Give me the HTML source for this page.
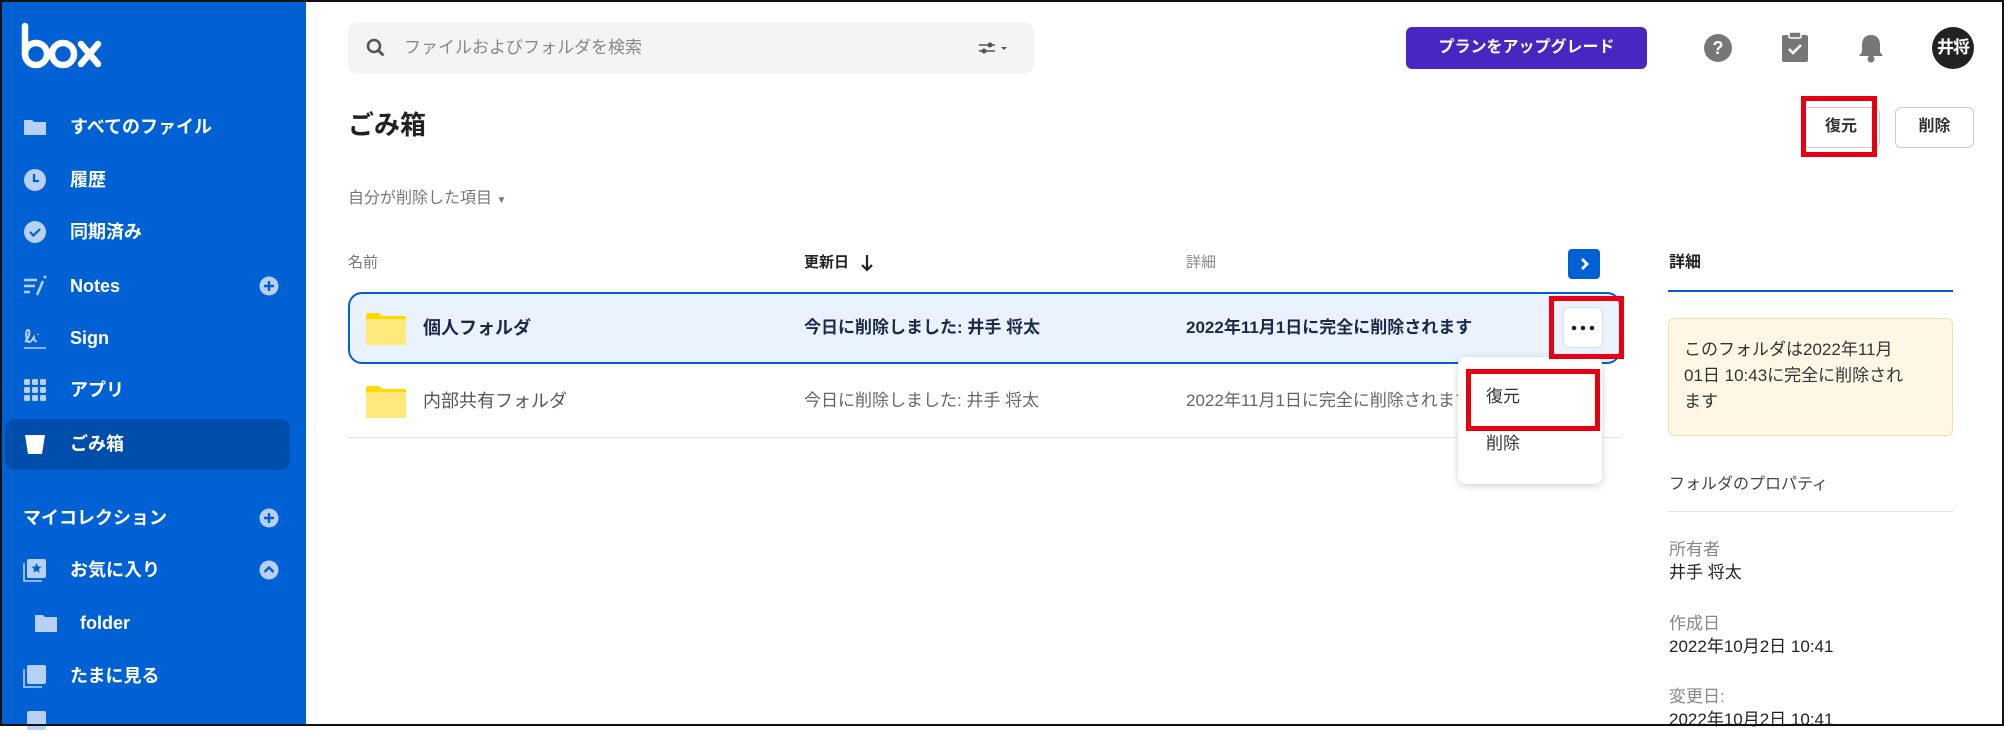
<!DOCTYPE html>
<html><head><meta charset="utf-8"><style>
*{margin:0;padding:0;box-sizing:border-box}
body{width:2004px;height:726px;overflow:hidden;background:#fff;font-family:"Liberation Sans","Noto Sans CJK JP",sans-serif;position:relative;color:#222}
.frame{position:absolute;left:0;top:0;width:2004px;height:726px;border:2px solid #111;z-index:50;pointer-events:none}
.abs{position:absolute;white-space:nowrap}
.side{position:absolute;left:0;top:0;width:306px;height:726px;background:#0061d5}
.nav{position:absolute;left:70px;color:#fff;font-weight:bold;font-size:18px;line-height:20px;transform:translateY(-10px)}
.ic{position:absolute;left:23px;width:24px;height:24px;transform:translateY(-12px)}
.t{position:absolute;white-space:nowrap;line-height:20px;transform:translateY(-10px)}
.red{position:absolute;border:5px solid #e60012;z-index:20}
</style></head><body>
<div class="frame"></div>
<div class="side">
  <svg style="position:absolute;left:18px;top:22px" width="90" height="50" viewBox="0 0 90 50"><g stroke="#fff" stroke-width="6.5" fill="none" stroke-linecap="round"><path d="M7 4v28"/><circle cx="18" cy="32" r="11"/><circle cx="45" cy="32" r="11"/><path d="M63 22l17 20M80 22L63 42"/></g></svg>
  <div style="position:absolute;left:5px;top:419px;width:285px;height:51px;background:#004eab;border-radius:10px"></div>
  <svg class="ic" style="top:127px" viewBox="0 0 24 24"><path d="M1 5h8l2 2h12v13H1z" fill="#b7d0f3"/></svg>
  <div class="nav" style="top:127px">すべてのファイル</div>
  <svg class="ic" style="top:180px" viewBox="0 0 24 24"><circle cx="12" cy="12" r="11" fill="#b7d0f3"/><path d="M11 6v7h5" stroke="#0061d5" stroke-width="2.2" fill="none"/></svg>
  <div class="nav" style="top:180px">履歴</div>
  <svg class="ic" style="top:232px" viewBox="0 0 24 24"><circle cx="12" cy="12" r="11" fill="#b7d0f3"/><path d="M7 12l3.5 3.5L17 9" stroke="#0061d5" stroke-width="2.2" fill="none"/></svg>
  <div class="nav" style="top:232px">同期済み</div>
  <svg class="ic" style="top:286px" viewBox="0 0 24 24"><path d="M1 6h13M1 12h11M1 18h6M14 21L20 7" stroke="#b7d0f3" stroke-width="2.5" fill="none"/><circle cx="22" cy="3" r="1.5" fill="#b7d0f3"/></svg>
  <div class="nav" style="top:286px">Notes</div>
  <svg class="ic" style="top:338px" viewBox="0 0 24 24"><path d="M2 16c4-4 6-12 3-12s-2 12 1 12 4-4 5-5c0 3 1 5 3 4M15 8v1" stroke="#b7d0f3" stroke-width="2" fill="none"/><path d="M1 22h22" stroke="#b7d0f3" stroke-width="1.6"/></svg>
  <div class="nav" style="top:338px">Sign</div>
  <svg class="ic" style="top:390px" viewBox="0 0 24 24" fill="#b7d0f3"><rect x="1" y="1" width="6" height="6" rx="1.5"/><rect x="9" y="1" width="6" height="6" rx="1.5"/><rect x="17" y="1" width="6" height="6" rx="1.5"/><rect x="1" y="9" width="6" height="6" rx="1.5"/><rect x="9" y="9" width="6" height="6" rx="1.5"/><rect x="17" y="9" width="6" height="6" rx="1.5"/><rect x="1" y="17" width="6" height="6" rx="1.5"/><rect x="9" y="17" width="6" height="6" rx="1.5"/><rect x="17" y="17" width="6" height="6" rx="1.5"/></svg>
  <div class="nav" style="top:390px">アプリ</div>
  <svg class="ic" style="top:444px" viewBox="0 0 24 24"><path d="M2 3h20l-3 19H5z" fill="#fff"/></svg>
  <div class="nav" style="top:444px">ごみ箱</div>
  <div class="nav" style="top:518px;left:23px">マイコレクション</div>
  <div class="nav" style="top:570px">お気に入り</div>
  <div class="nav" style="top:623px;left:80px">folder</div>
  <div class="nav" style="top:676px">たまに見る</div>
  <svg class="ic" style="top:570px" viewBox="0 0 24 24"><rect x="4" y="1" width="19" height="19" rx="2" fill="#b7d0f3"/><path d="M1 5v18h18" stroke="#b7d0f3" stroke-width="1.6" fill="none"/><path d="M13.5 5l1.5 3.5 3.5.3-2.7 2.3.9 3.6-3.2-2-3.2 2 .9-3.6-2.7-2.3 3.5-.3z" fill="#0061d5"/></svg>
  <svg class="ic" style="top:623px;left:34px" viewBox="0 0 24 24"><path d="M1 4h8l2 2h12v15H1z" fill="#b7d0f3"/></svg>
  <svg class="ic" style="top:676px" viewBox="0 0 24 24"><rect x="4" y="1" width="19" height="19" rx="2" fill="#b7d0f3"/><path d="M1 5v18h18" stroke="#b7d0f3" stroke-width="1.6" fill="none"/></svg>
  <svg class="ic" style="top:722px" viewBox="0 0 24 24"><rect x="4" y="1" width="19" height="19" rx="2" fill="#b7d0f3"/></svg>
  <svg style="position:absolute;left:259px;top:276px" width="20" height="20" viewBox="0 0 20 20"><circle cx="10" cy="10" r="9.5" fill="#b7d0f3"/><path d="M10 5v10M5 10h10" stroke="#0061d5" stroke-width="2.4"/></svg>
  <svg style="position:absolute;left:259px;top:508px" width="20" height="20" viewBox="0 0 20 20"><circle cx="10" cy="10" r="9.5" fill="#b7d0f3"/><path d="M10 5v10M5 10h10" stroke="#0061d5" stroke-width="2.4"/></svg>
  <svg style="position:absolute;left:259px;top:560px" width="20" height="20" viewBox="0 0 20 20"><circle cx="10" cy="10" r="9.5" fill="#b7d0f3"/><path d="M5.5 12l4.5-4.5 4.5 4.5" stroke="#0061d5" stroke-width="2.4" fill="none"/></svg>
</div>

<div style="position:absolute;left:348px;top:22px;width:686px;height:52px;background:#f4f4f4;border-radius:10px"></div>
<svg style="position:absolute;left:366px;top:38px" width="20" height="20" viewBox="0 0 20 20"><circle cx="8" cy="8" r="6" stroke="#555" stroke-width="2.6" fill="none"/><path d="M12.5 12.5l5 5" stroke="#555" stroke-width="2.8"/></svg>
<div class="t" style="left:404px;top:48px;font-size:17px;color:#888">ファイルおよびフォルダを検索</div>
<svg style="position:absolute;left:978px;top:40px" width="40" height="16" viewBox="0 0 40 16"><path d="M1 5h16M1 11h16" stroke="#555" stroke-width="1.6"/><circle cx="12" cy="5" r="2.5" fill="#555"/><circle cx="6" cy="11" r="2.5" fill="#555"/><path d="M23 7l3 3 3-3z" fill="#555"/></svg>

<div style="position:absolute;left:1406px;top:27px;width:241px;height:42px;background:#4826c2;border-radius:6px;color:#fff;font-weight:bold;font-size:16px;line-height:42px;text-align:center">プランをアップグレード</div>
<svg style="position:absolute;left:1704px;top:34px" width="28" height="28" viewBox="0 0 28 28"><circle cx="14" cy="14" r="14" fill="#777"/><text x="14" y="20" font-size="18" font-weight="bold" fill="#fff" text-anchor="middle" font-family="Liberation Sans">?</text></svg>
<svg style="position:absolute;left:1781px;top:31px" width="28" height="32" viewBox="0 0 28 32"><rect x="1" y="4" width="26" height="27" rx="2" fill="#777"/><rect x="8" y="1" width="12" height="6" rx="1.5" fill="#777" stroke="#fff" stroke-width="1.5"/><path d="M8 18l4 4 8-8" stroke="#fff" stroke-width="2.6" fill="none"/></svg>
<svg style="position:absolute;left:1857px;top:32px" width="28" height="32" viewBox="0 0 28 32"><path d="M14 3c-6 0-9 4-9 10v7l-3 4h24l-3-4v-7c0-6-3-10-9-10z" fill="#777"/><circle cx="14" cy="27" r="3.5" fill="#777"/></svg>
<div style="position:absolute;left:1932px;top:27px;width:42px;height:42px;border-radius:50%;background:#222;color:#fff;font-weight:bold;font-size:17px;line-height:42px;text-align:center;letter-spacing:-1px">井将</div>

<div class="t" style="left:348px;top:125px;font-size:26px;font-weight:bold;color:#222;line-height:30px;transform:translateY(-15px)">ごみ箱</div>
<div style="position:absolute;left:1802px;top:107px;width:78px;height:41px;border:1.5px solid #ccc;border-radius:6px;font-weight:bold;font-size:16px;line-height:38px;text-align:center;color:#333">復元</div>
<div style="position:absolute;left:1895px;top:107px;width:79px;height:41px;border:1.5px solid #ccc;border-radius:6px;font-weight:bold;font-size:16px;line-height:38px;text-align:center;color:#333">削除</div>
<div class="red" style="left:1801px;top:96px;width:76px;height:61px"></div>

<div class="t" style="left:348px;top:199px;font-size:16px;color:#777">自分が削除した項目 <span style="font-size:10px">▼</span></div>

<div class="t" style="left:348px;top:263px;font-size:15px;color:#777">名前</div>
<div class="t" style="left:804px;top:263px;font-size:15px;color:#222;font-weight:bold">更新日</div>
<svg style="position:absolute;left:860px;top:254px" width="14" height="18" viewBox="0 0 14 18"><path d="M7 1v15M2 11l5 5 5-5" stroke="#222" stroke-width="2.2" fill="none"/></svg>
<div class="t" style="left:1186px;top:263px;font-size:15px;color:#888">詳細</div>
<div style="position:absolute;left:1568px;top:249px;width:32px;height:30px;background:#0061d5;border-radius:4px"></div>
<svg style="position:absolute;left:1576px;top:256px" width="16" height="16" viewBox="0 0 16 16"><path d="M6 3l5 5-5 5" stroke="#fff" stroke-width="2.8" fill="none"/></svg>

<div style="position:absolute;left:348px;top:292px;width:1273px;height:72px;background:#e9f2fd;border:2px solid #0061d5;border-radius:14px"></div>
<svg style="position:absolute;left:366px;top:313px" width="40" height="32" viewBox="0 0 40 32"><path d="M0 2a2 2 0 0 1 2-2h11l3 3h22a2 2 0 0 1 2 2v25a2 2 0 0 1-2 2H2a2 2 0 0 1-2-2z" fill="#ffd900"/><rect x="0" y="6" width="40" height="26" rx="2" fill="#ffe97a"/></svg>
<div class="t" style="left:423px;top:328px;font-size:18px;font-weight:bold;color:#1a2a48">個人フォルダ</div>
<div class="t" style="left:804px;top:328px;font-size:17px;font-weight:bold;color:#1a2a48">今日に削除しました: 井手 将太</div>
<div class="t" style="left:1186px;top:328px;font-size:17px;font-weight:bold;color:#1a2a48">2022年11月1日に完全に削除されます</div>
<div style="position:absolute;left:1563px;top:307px;width:40px;height:41px;background:#fff;border:1px solid #dde;border-radius:6px"></div>
<svg style="position:absolute;left:1571px;top:325px" width="24" height="6" viewBox="0 0 24 6"><circle cx="3" cy="3" r="2.3" fill="#222"/><circle cx="12" cy="3" r="2.3" fill="#222"/><circle cx="21" cy="3" r="2.3" fill="#222"/></svg>
<div class="red" style="left:1549px;top:296px;width:75px;height:63px"></div>

<svg style="position:absolute;left:366px;top:386px" width="40" height="32" viewBox="0 0 40 32"><path d="M0 2a2 2 0 0 1 2-2h11l3 3h22a2 2 0 0 1 2 2v25a2 2 0 0 1-2 2H2a2 2 0 0 1-2-2z" fill="#ffd900"/><rect x="0" y="6" width="40" height="26" rx="2" fill="#ffe97a"/></svg>
<div class="t" style="left:423px;top:401px;font-size:18px;color:#555">内部共有フォルダ</div>
<div class="t" style="left:804px;top:401px;font-size:17px;color:#666">今日に削除しました: 井手 将太</div>
<div class="t" style="left:1186px;top:401px;font-size:17px;color:#666">2022年11月1日に完全に削除されます</div>
<div style="position:absolute;left:348px;top:437px;width:1273px;height:1px;background:#e4e4e4"></div>

<div style="position:absolute;left:1458px;top:357px;width:144px;height:127px;background:#fff;border-radius:8px;box-shadow:0 2px 8px rgba(0,0,0,.18);z-index:10"></div>
<div class="t" style="left:1486px;top:397px;font-size:17px;color:#333;z-index:11">復元</div>
<div class="t" style="left:1486px;top:444px;font-size:17px;color:#333;z-index:11">削除</div>
<div class="red" style="left:1466px;top:369px;width:134px;height:62px"></div>

<div class="t" style="left:1669px;top:263px;font-size:16px;font-weight:bold;color:#222">詳細</div>
<div style="position:absolute;left:1668px;top:290px;width:285px;height:2px;background:#0061d5"></div>
<div style="position:absolute;left:1668px;top:318px;width:285px;height:118px;background:#fff7e6;border:1.5px solid #f7dea0;border-radius:6px"></div>
<div class="t" style="left:1684px;top:350px;font-size:17px;color:#333">このフォルダは2022年11月</div>
<div class="t" style="left:1684px;top:376px;font-size:17px;color:#333">01日 10:43に完全に削除され</div>
<div class="t" style="left:1684px;top:402px;font-size:17px;color:#333">ます</div>
<div class="t" style="left:1669px;top:485px;font-size:16px;color:#444">フォルダのプロパティ</div>
<div style="position:absolute;left:1668px;top:511px;width:285px;height:1px;background:#e4e4e4"></div>
<div class="t" style="left:1669px;top:550px;font-size:17px;color:#888">所有者</div>
<div class="t" style="left:1669px;top:573px;font-size:17px;color:#222">井手 将太</div>
<div class="t" style="left:1669px;top:624px;font-size:17px;color:#888">作成日</div>
<div class="t" style="left:1669px;top:647px;font-size:17px;color:#222">2022年10月2日 10:41</div>
<div class="t" style="left:1669px;top:697px;font-size:17px;color:#888">変更日:</div>
<div class="t" style="left:1669px;top:720px;font-size:17px;color:#222">2022年10月2日 10:41</div>
</body></html>
